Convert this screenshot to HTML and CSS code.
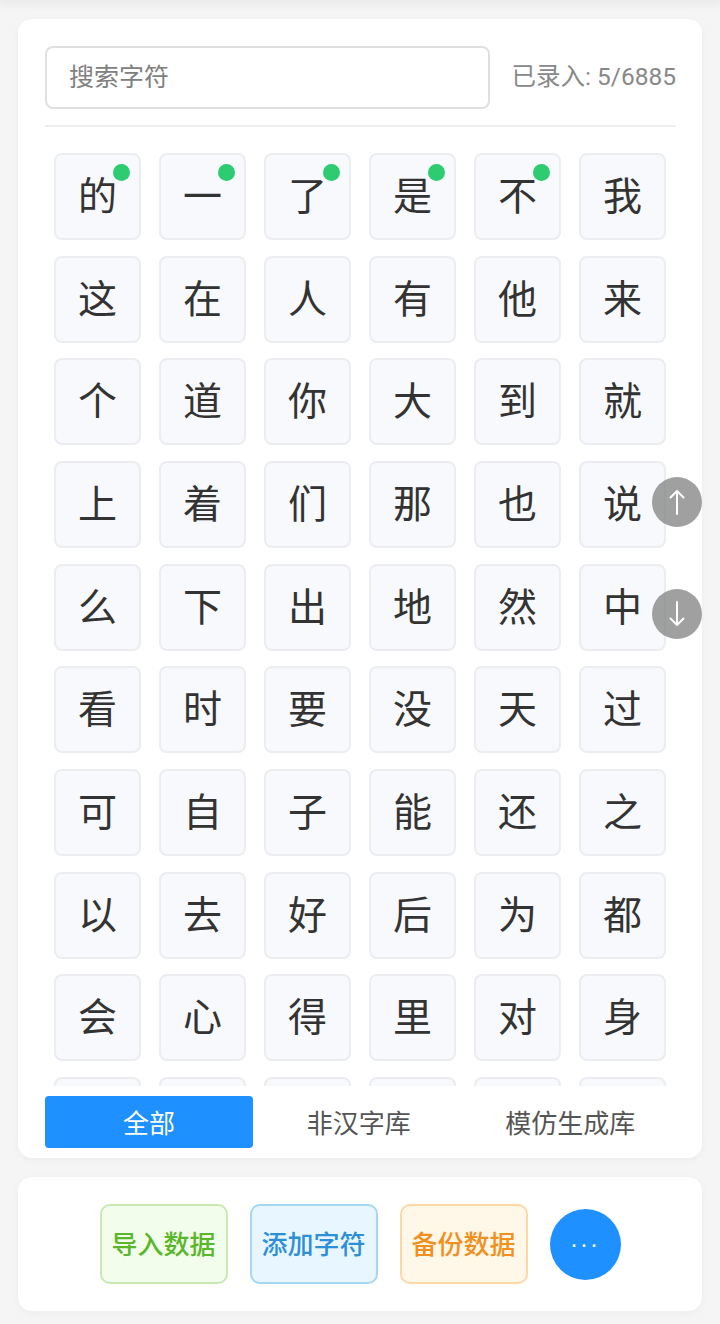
FILE: index.html
```html
<!DOCTYPE html>
<html lang="zh">
<head>
<meta charset="utf-8">
<title>字符库</title>
<link rel="stylesheet" href="styles.css">
</head>
<body>
<div class="topbar"></div>
<div class="page">
  <section class="card main-card">
    <div class="header">
      <input class="search" type="text" placeholder="搜索字符">
      <span class="counter">已录入: 5/6885</span>
    </div>
    <div class="divider"></div>
    <div class="grid-wrap">
      <div class="grid">
        <div class="cell">的<span class="dot"></span></div>
        <div class="cell">一<span class="dot"></span></div>
        <div class="cell">了<span class="dot"></span></div>
        <div class="cell">是<span class="dot"></span></div>
        <div class="cell">不<span class="dot"></span></div>
        <div class="cell">我</div>
        <div class="cell">这</div><div class="cell">在</div><div class="cell">人</div><div class="cell">有</div><div class="cell">他</div><div class="cell">来</div>
        <div class="cell">个</div><div class="cell">道</div><div class="cell">你</div><div class="cell">大</div><div class="cell">到</div><div class="cell">就</div>
        <div class="cell">上</div><div class="cell">着</div><div class="cell">们</div><div class="cell">那</div><div class="cell">也</div><div class="cell">说</div>
        <div class="cell">么</div><div class="cell">下</div><div class="cell">出</div><div class="cell">地</div><div class="cell">然</div><div class="cell">中</div>
        <div class="cell">看</div><div class="cell">时</div><div class="cell">要</div><div class="cell">没</div><div class="cell">天</div><div class="cell">过</div>
        <div class="cell">可</div><div class="cell">自</div><div class="cell">子</div><div class="cell">能</div><div class="cell">还</div><div class="cell">之</div>
        <div class="cell">以</div><div class="cell">去</div><div class="cell">好</div><div class="cell">后</div><div class="cell">为</div><div class="cell">都</div>
        <div class="cell">会</div><div class="cell">心</div><div class="cell">得</div><div class="cell">里</div><div class="cell">对</div><div class="cell">身</div>
        <div class="cell"></div><div class="cell"></div><div class="cell"></div><div class="cell"></div><div class="cell"></div><div class="cell"></div>
      </div>
    </div>
    <div class="tabs">
      <div class="tab active">全部</div>
      <div class="tab">非汉字库</div>
      <div class="tab">模仿生成库</div>
    </div>
  </section>
  <section class="card action-card">
    <button class="act green">导入数据</button>
    <button class="act blue">添加字符</button>
    <button class="act orange">备份数据</button>
    <button class="more">···</button>
  </section>
</div>
<div class="scroll-btn up">
  <svg width="20" height="28" viewBox="0 0 20 28"><path d="M10 26V3M3.5 9.5L10 3L16.5 9.5" fill="none" stroke="#fff" stroke-width="2" stroke-linecap="round" stroke-linejoin="round"/></svg>
</div>
<div class="scroll-btn down">
  <svg width="20" height="28" viewBox="0 0 20 28"><path d="M10 2V25M3.5 18.5L10 25L16.5 18.5" fill="none" stroke="#fff" stroke-width="2" stroke-linecap="round" stroke-linejoin="round"/></svg>
</div>
</body>
</html>
```
FILE: styles.css
```css
* { box-sizing: border-box; }
html, body {
  margin: 0;
  padding: 0;
  background: #f5f5f5;
  font-family: "Roboto", "Noto Sans CJK SC", "Noto Sans", sans-serif;
}
body {
  width: 720px;
  height: 1324px;
  overflow: hidden;
  position: relative;
}
.topbar {
  height: 0;
  box-shadow: 0 0 10px 3px rgba(0,0,0,0.08);
}
.page {
  padding: 19px 18px 0 18px;
  display: flex;
  flex-direction: column;
  gap: 19px;
}
.card {
  background: #fff;
  border-radius: 14px;
  box-shadow: 0 2px 8px rgba(0,0,0,0.04);
}
.main-card {
  height: 1139px;
  padding: 27px 26px 9px 27px;
  display: flex;
  flex-direction: column;
}
.header {
  display: flex;
  align-items: center;
  justify-content: space-between;
}
.search {
  width: 445px;
  height: 63px;
  border: 2px solid #e0e0e0;
  border-radius: 8px;
  padding: 0 22px;
  font-family: inherit;
  font-size: 25px;
  color: #333;
  outline: none;
  background: #fff;
}
.search::placeholder { color: #808080; }
.counter {
  font-size: 24.5px;
  color: #888;
  line-height: 1;
}
.divider {
  height: 2px;
  background: #eeeeee;
  margin-top: 16px;
}
.grid-wrap {
  height: 959px;
  overflow: hidden;
  padding: 26px 10px 0 9px;
  flex: none;
}
.grid {
  display: grid;
  grid-template-columns: repeat(6, 87px);
  grid-auto-rows: 87px;
  column-gap: 18px;
  row-gap: 15.67px;
}
.cell {
  position: relative;
  background: #f7f9fc;
  border: 2px solid #ebedf0;
  border-radius: 8px;
  display: flex;
  align-items: center;
  justify-content: center;
  font-size: 39px;
  line-height: 1;
  padding-top: 2px;
  color: #333;
}
.dot {
  position: absolute;
  top: 9px;
  right: 9px;
  width: 17px;
  height: 17px;
  border-radius: 50%;
  background: #2ecc71;
}
.tabs {
  margin-top: 10px;
  display: grid;
  grid-template-columns: 208px 1fr 1fr;
  height: 52px;
}
.tab {
  display: flex;
  align-items: center;
  justify-content: center;
  font-size: 26px;
  line-height: 1;
  padding-top: 4px;
  color: #555;
  border-radius: 4px;
}
.tab.active {
  background: #1e90ff;
  color: #fff;
}
.action-card {
  height: 134px;
  display: flex;
  align-items: center;
  justify-content: center;
  gap: 22px;
}
.act {
  width: 128px;
  height: 80px;
  border-radius: 10px;
  border: 2px solid;
  font-family: inherit;
  font-size: 26px;
  font-weight: 500;
  line-height: 1;
  padding: 2px 0 0;
}
.green { background: #f3fdec; border-color: #c9e8b2; color: #5ab72b; }
.blue { background: #e8f6ff; border-color: #a5d6f2; color: #2d8fd8; }
.orange { background: #fff7e8; border-color: #fbd9a6; color: #f0901e; }
.more {
  width: 71px;
  height: 71px;
  border-radius: 50%;
  border: none;
  background: #1e90ff;
  color: #fff;
  font-size: 24px;
  letter-spacing: 2px;
  padding: 0;
}
.scroll-btn {
  position: absolute;
  right: 18px;
  width: 50px;
  height: 50px;
  border-radius: 50%;
  background: rgba(128,128,128,0.75);
  display: flex;
  align-items: center;
  justify-content: center;
}
.scroll-btn.up { top: 477px; }
.scroll-btn.down { top: 589px; }
```
